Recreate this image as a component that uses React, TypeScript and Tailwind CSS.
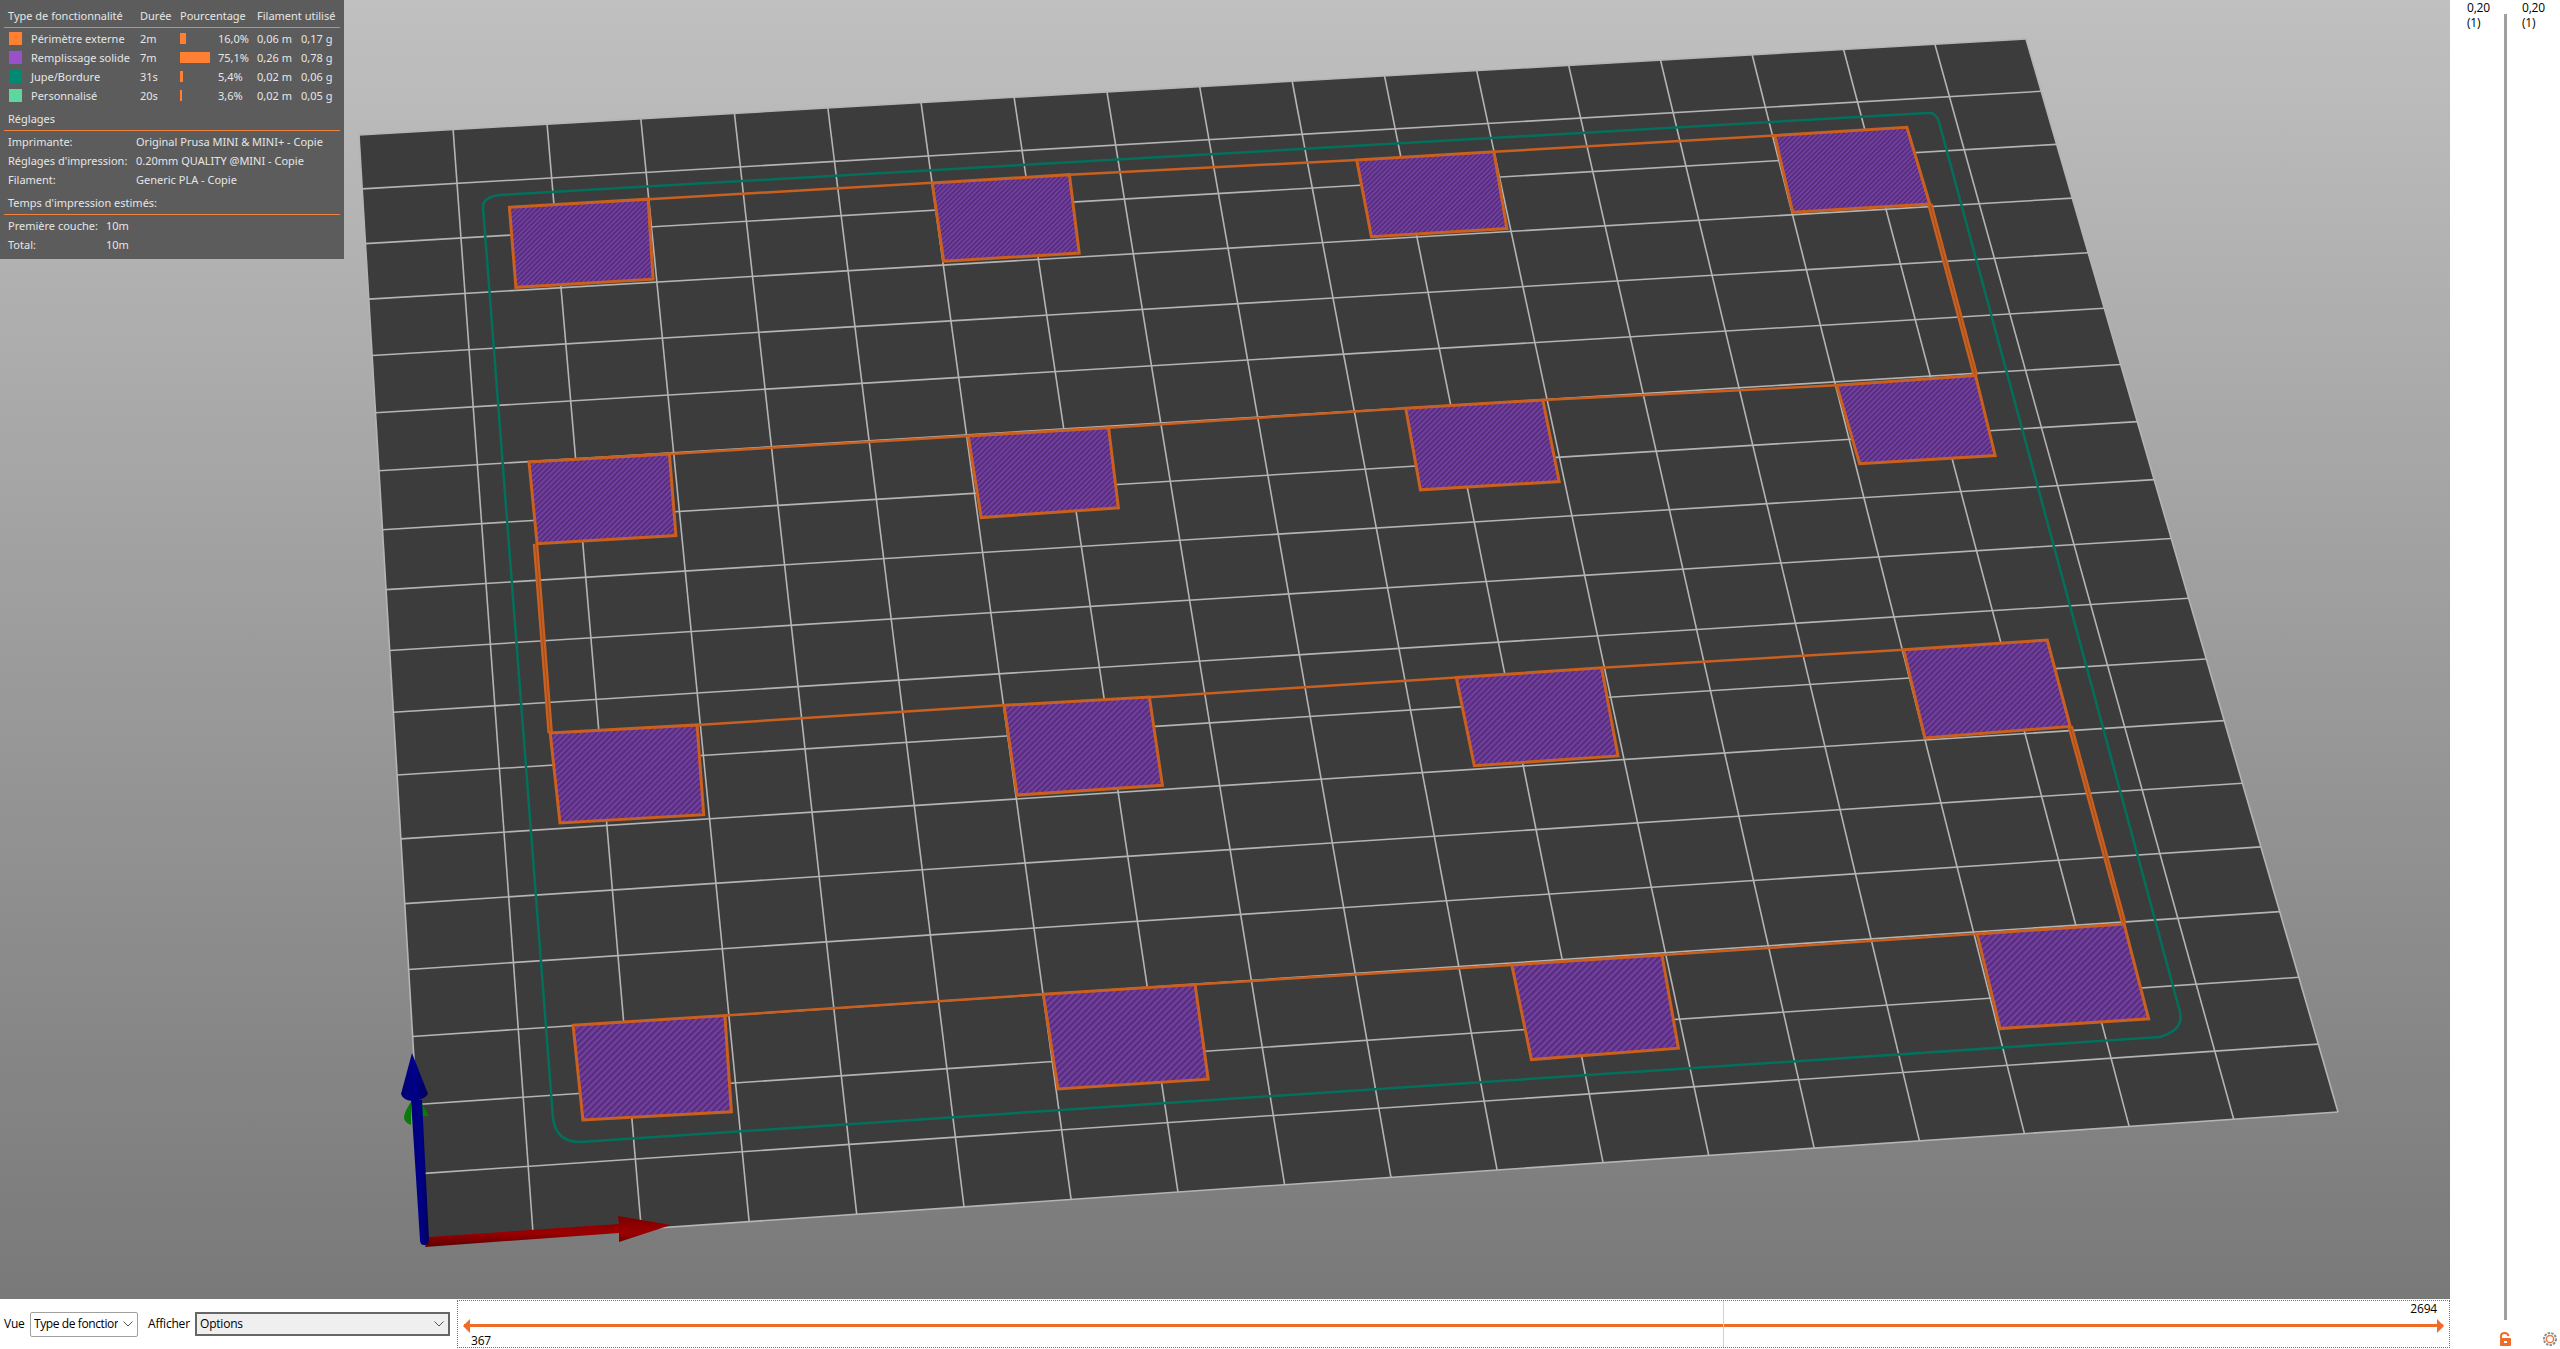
import React from "react";

type P = [number, number];

const BED: [P, P, P, P] = [[359, 135], [2026, 39], [2338, 1112], [425, 1244]];

function homography(q: [P, P, P, P]) {
  const [[x0, y0], [x1, y1], [x2, y2], [x3, y3]] = q;
  const dx1 = x1 - x2, dx2 = x3 - x2, sx = x0 - x1 + x2 - x3;
  const dy1 = y1 - y2, dy2 = y3 - y2, sy = y0 - y1 + y2 - y3;
  const den = dx1 * dy2 - dx2 * dy1;
  const g = (sx * dy2 - dx2 * sy) / den;
  const h = (dx1 * sy - sx * dy1) / den;
  const a = x1 - x0 + g * x1, b = x3 - x0 + h * x3, c = x0;
  const d = y1 - y0 + g * y1, e = y3 - y0 + h * y3, f = y0;
  return (u: number, v: number): P => {
    const w = g * u + h * v + 1;
    return [(a * u + b * v + c) / w, (d * u + e * v + f) / w];
  };
}
const map = homography(BED);
const S = 2560 / 1568;
const sc = (p: P): P => [p[0] * S, p[1] * S];

const squares: P[][] = [
  [[312, 127], [397, 122], [400, 171], [316, 176]],
  [[571, 112], [655, 107], [661, 155], [578, 160]],
  [[831, 98], [915, 93], [923, 140], [840, 145]],
  [[1087, 83], [1168, 78], [1182, 125], [1098, 130]],
  [[324, 283], [410, 278], [414, 328], [329, 333]],
  [[593, 267], [679, 262], [685, 311], [601, 317]],
  [[861, 250], [945, 245], [955, 295], [870, 300]],
  [[1125, 236], [1210, 230], [1222, 279], [1139, 284]],
  [[337, 449], [427, 444], [431, 499], [343, 504]],
  [[615, 432], [704, 427], [712, 481], [623, 487]],
  [[892, 415], [981, 409], [991, 463], [903, 469]],
  [[1166, 398], [1254, 392], [1268, 445], [1179, 452]],
  [[351, 628], [444, 622], [448, 681], [357, 686]],
  [[639, 609], [732, 603], [740, 661], [648, 667]],
  [[926, 591], [1018, 585], [1028, 642], [938, 649]],
  [[1211, 572], [1301, 566], [1316, 624], [1225, 630]],
];
const thin: [P, P][] = [
  [[397, 122], [571, 112]], [[655, 107], [831, 98]], [[915, 93], [1087, 83]],
  [[1125, 236], [945, 245]], [[861, 250], [679, 262]], [[593, 267], [410, 278]],
  [[427, 444], [615, 432]], [[704, 427], [892, 415]], [[981, 409], [1166, 398]],
  [[1211, 572], [1018, 585]], [[926, 591], [732, 603]], [[639, 609], [444, 622]],
];
const thick: [P, P][] = [
  [[1182, 125], [1210, 230]],
  [[328, 333], [337, 449]],
  [[1268, 445], [1301, 566]],
];

const poly = (ps: P[]) => ps.map((p) => sc(p).map((n) => n.toFixed(1)).join(",")).join(" ");

const hatchRows = [
  { id: "hatch0", w: 3.4 },
  { id: "hatch1", w: 3.7 },
  { id: "hatch2", w: 4.1 },
  { id: "hatch3", w: 4.6 },
];

function Scene() {
  const lines: [P, P][] = [];
  for (let i = 0; i <= 18; i++) {
    lines.push([map(i / 18, 0), map(i / 18, 1)]);
    lines.push([map(0, i / 18), map(1, i / 18)]);
  }
  return (
    <svg className="absolute inset-0 w-full h-full" viewBox="0 0 2450 1299">
      <defs>
        {hatchRows.map((h) => (
          <pattern key={h.id} id={h.id} width={h.w} height={h.w} patternUnits="userSpaceOnUse" patternTransform="rotate(-45)">
            <rect width={h.w} height={h.w} fill="#743fa2" />
            <rect width={h.w} height={h.w * 0.5} fill="#552e79" />
          </pattern>
        ))}
        <linearGradient id="red" x1="0" y1="0" x2="0" y2="1">
          <stop offset="0" stopColor="#7a0000" />
          <stop offset="0.55" stopColor="#9c0000" />
          <stop offset="1" stopColor="#5a0000" />
        </linearGradient>
        <linearGradient id="blue" x1="0" y1="0" x2="1" y2="0">
          <stop offset="0" stopColor="#000070" />
          <stop offset="0.5" stopColor="#00008a" />
          <stop offset="1" stopColor="#00005a" />
        </linearGradient>
      </defs>
      <polygon points={BED.map((p) => p.join(",")).join(" ")} fill="#3c3c3c" />
      {lines.map(([a, b], i) => (
        <line key={i} x1={a[0]} y1={a[1]} x2={b[0]} y2={b[1]} stroke="#b4b4b4" strokeWidth="1.6" />
      ))}
      <path
        d="M483 207 Q483 197 500 195 L1928 113 Q1936 112 1939 122 L2180 1012 Q2184 1030 2160 1037 L580 1142 Q556 1142 553 1118 Z"
        fill="none"
        stroke="#04705c"
        strokeWidth="2.5"
      />
      {thin.map(([a, b], i) => {
        const [p, q] = [sc(a), sc(b)];
        return <line key={i} x1={p[0]} y1={p[1]} x2={q[0]} y2={q[1]} stroke="#c9601f" strokeWidth="2.5" />;
      })}
      {thick.map(([a, b], i) => {
        const [p, q] = [sc(a), sc(b)];
        return (
          <g key={i}>
            <line x1={p[0]} y1={p[1]} x2={q[0]} y2={q[1]} stroke="#c9601f" strokeWidth="5.5" />
            <line x1={p[0]} y1={p[1]} x2={q[0]} y2={q[1]} stroke="#8f4a22" strokeWidth="0.8" />
          </g>
        );
      })}
      {squares.map((s, i) => (
        <polygon key={i} points={poly(s)} fill={`url(#hatch${Math.floor(i / 4)})`} stroke="#c9601f" strokeWidth="3" />
      ))}
      <path d="M411 1102 Q404 1112 404 1118 Q405 1123 411 1125 Z" fill="#0a7a0a" />
      <path d="M420 1100 L429 1116 L420 1116 Z" fill="#0a7a0a" />
      <polygon points="428,1237 619,1224 618,1216 671,1225 619,1242 619,1233 425,1247" fill="url(#red)" />
      <path d="M411 1100 L422 1100 L429 1240 Q429 1245 424 1245 Q420 1245 420 1240 Z" fill="url(#blue)" />
      <path d="M412 1053 L428 1094 Q424 1100 412 1101 Q403 1100 401 1094 Z" fill="url(#blue)" />
    </svg>
  );
}

const rows = [
  { c: "bg-[#ff7f33]", n: "Périmètre externe", d: "2m", w: 6, p: "16,0%", l: "0,06 m", g: "0,17 g" },
  { c: "bg-[#9a4fcb]", n: "Remplissage solide", d: "7m", w: 30, p: "75,1%", l: "0,26 m", g: "0,78 g" },
  { c: "bg-[#008a70]", n: "Jupe/Bordure", d: "31s", w: 3, p: "5,4%", l: "0,02 m", g: "0,06 g" },
  { c: "bg-[#5dd79b]", n: "Personnalisé", d: "20s", w: 2, p: "3,6%", l: "0,02 m", g: "0,05 g" },
];

function Sep() {
  return <div className="h-px bg-[#f0803c] mx-[4px] mt-[2px] mb-[1px]" />;
}

function Legend() {
  return (
    <div className="absolute left-0 top-0 w-[344px] h-[259px] bg-[#5c5c5c] text-[#e6e6e6] text-[11px] leading-[19px] pt-[6px] font-['Noto_Sans',sans-serif]">
      <div className="flex pl-[8px] h-[19px]">
        <span className="w-[132px]">Type de fonctionnalité</span>
        <span className="w-[40px]">Durée</span>
        <span className="w-[77px]">Pourcentage</span>
        <span>Filament utilisé</span>
      </div>
      <Sep />
      {rows.map((r) => (
        <div key={r.n} className="flex items-center h-[19px] pl-[9px]">
          <span className={`w-[13px] h-[13px] ${r.c}`} />
          <span className="w-[109px] ml-[9px] whitespace-nowrap">{r.n}</span>
          <span className="w-[40px]">{r.d}</span>
          <span className="w-[38px]">
            <span className="block h-[11px] bg-[#ff7f33]" style={{ width: r.w }} />
          </span>
          <span className="w-[39px]">{r.p}</span>
          <span className="w-[44px]">{r.l}</span>
          <span>{r.g}</span>
        </div>
      ))}
      <div className="pl-[8px] h-[19px] mt-[4px]">Réglages</div>
      <Sep />
      {[
        ["Imprimante:", "Original Prusa MINI & MINI+ - Copie"],
        ["Réglages d'impression:", "0.20mm QUALITY @MINI - Copie"],
        ["Filament:", "Generic PLA - Copie"],
      ].map(([a, b]) => (
        <div key={a} className="flex h-[19px] pl-[8px]">
          <span className="w-[128px] whitespace-nowrap">{a}</span>
          <span>{b}</span>
        </div>
      ))}
      <div className="pl-[8px] h-[19px] mt-[4px]">Temps d'impression estimés:</div>
      <Sep />
      {[
        ["Première couche:", "10m"],
        ["Total:", "10m"],
      ].map(([a, b]) => (
        <div key={a} className="flex h-[19px] pl-[8px]">
          <span className="w-[98px] whitespace-nowrap">{a}</span>
          <span>{b}</span>
        </div>
      ))}
    </div>
  );
}

function Chevron() {
  return (
    <svg width="10" height="6" viewBox="0 0 10 6" className="shrink-0">
      <path d="M0.5 0.5 L5 5 L9.5 0.5" fill="none" stroke="#555" strokeWidth="1" />
    </svg>
  );
}

function BottomBar() {
  return (
    <div className="h-[50px] flex items-center bg-white text-black text-[12px] font-['Open_Sans',sans-serif] tracking-[-0.2px]">
      <span className="ml-[4px] w-[26px]">Vue</span>
      <div className="w-[108px] h-[25px] flex items-center justify-between border border-[#a0a0a0] rounded-[2px] pl-[3px] pr-[4px]">
        <span className="w-[84px] overflow-hidden whitespace-nowrap tracking-[-0.4px]">Type de fonctionnalité</span>
        <Chevron />
      </div>
      <span className="ml-[10px] w-[47px]">Afficher</span>
      <div className="w-[255px] h-[24px] flex items-center justify-between border-2 border-[#666] bg-[#efefef] pl-[3px] pr-[4px]">
        <span>Options</span>
        <Chevron />
      </div>
      <div className="relative ml-[7px] flex-1 h-[48px] border border-dotted border-[#808000]">
        <div className="absolute left-[6px] right-[6px] top-[23px] h-[3px] bg-[#ee6c2a]" />
        <svg className="absolute left-[5px] top-[18px]" width="7" height="14" viewBox="0 0 7 14">
          <path d="M7 0 L0 7 L7 14 Z" fill="#ee6c2a" />
        </svg>
        <svg className="absolute right-[5px] top-[18px]" width="7" height="14" viewBox="0 0 7 14">
          <path d="M0 0 L7 7 L0 14 Z" fill="#ee6c2a" />
        </svg>
        <div className="absolute left-[1265px] top-0 bottom-0 w-px bg-[#d0d0d0]" />
        <span className="absolute left-[13px] bottom-[-3px]">367</span>
        <span className="absolute right-[12px] top-[-1px]">2694</span>
      </div>
      <div className="w-[110px]" />
    </div>
  );
}

function Sidebar() {
  return (
    <div className="relative w-[110px] bg-white text-black text-[12px] leading-[15px] font-['Open_Sans',sans-serif] tracking-[-0.2px]">
      <div className="absolute left-[17px] top-0">0,20<br />(1)</div>
      <div className="absolute left-[72px] top-0">0,20<br />(1)</div>
      <div className="absolute left-[54px] top-[14px] w-[3px] h-[1306px] bg-[#a0a0a0]" />
    </div>
  );
}

function Corner() {
  return (
    <>
      <svg className="absolute right-[48px] bottom-[3px]" width="13" height="14" viewBox="0 0 13 14">
        <path d="M2 6 V4 Q2 1 5.5 1 Q9 1 9.5 4" fill="none" stroke="#ee6c2a" strokeWidth="2" />
        <rect x="1" y="6" width="11" height="8" rx="1" fill="#ee6c2a" />
        <rect x="5" y="9" width="3" height="2" fill="#fff" />
      </svg>
      <svg className="absolute right-[3px] bottom-[3px]" width="14" height="14" viewBox="0 0 14 14">
        <circle cx="7" cy="7" r="6" fill="none" stroke="#8c8c8c" strokeWidth="2" strokeDasharray="2.4 1.2" />
        <circle cx="7" cy="7" r="3.6" fill="none" stroke="#ee7a3c" strokeWidth="1.5" />
      </svg>
    </>
  );
}

export default function App() {
  return (
    <div className="relative w-[2560px] h-[1349px] flex flex-col overflow-hidden bg-white">
      <div className="flex h-[1299px]">
        <div className="relative flex-1 bg-gradient-to-b from-[#c0c0c0] to-[#797979]">
          <Scene />
          <Legend />
        </div>
        <Sidebar />
      </div>
      <BottomBar />
      <Corner />
    </div>
  );
}
